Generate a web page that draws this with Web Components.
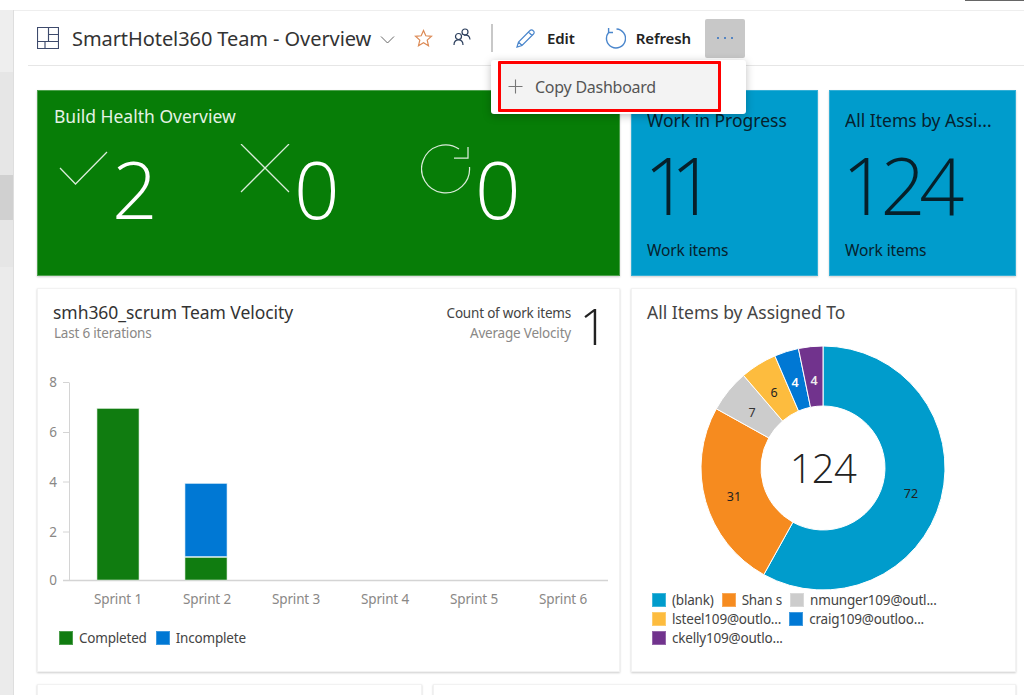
<!DOCTYPE html>
<html><head><meta charset="utf-8">
<style>
html,body{margin:0;padding:0;width:1024px;height:695px;overflow:hidden;background:#fff;font-family:"Noto Sans","Open Sans",sans-serif}
</style></head><body>
<dash-app></dash-app>
<script>
const FONT='"Noto Sans","Open Sans",sans-serif';
class Base extends HTMLElement{
  constructor(){super();this.attachShadow({mode:'open'}).innerHTML=this.tpl();}
}
customElements.define('dash-tile',class extends Base{tpl(){return `<style>
:host{display:block;position:relative;background:var(--bg,#fff);box-shadow:0 1px 2px rgba(0,0,0,.2);outline:1px solid var(--edge,rgba(0,0,0,.05));outline-offset:-1px;overflow:hidden;color:var(--fg,#222);min-width:0}
</style><slot></slot>`}});
customElements.define('count-tile',class extends Base{tpl(){return `<style>
:host{display:flex;flex-direction:column;height:100%;box-sizing:border-box;padding:19px 16px 16px;color:#06222e;font-family:${FONT}}
.t{font-size:17.5px;line-height:22px;white-space:nowrap;overflow:hidden}
.n{font-size:79px;line-height:84px;font-weight:300;margin:12px 0 0 -3px;letter-spacing:var(--num-ls,-6.5px);font-family:"Open Sans",sans-serif;color:#06202a}
.b{font-size:15.5px;line-height:20px;margin-top:auto;letter-spacing:-.1px}
</style><div class="t"><slot name="title"></slot></div><div class="n"><slot name="num"></slot></div><div class="b"><slot name="foot"></slot></div>`}});
customElements.define('build-stat',class extends Base{tpl(){return `<style>
:host{display:flex;align-items:flex-start;color:#fff}
.n{font-family:"Open Sans",sans-serif;font-weight:300;font-size:80px;line-height:84px;margin-left:4px}
::slotted(svg){display:block;width:50px;height:58px;margin-top:-2px;fill:none;stroke:rgba(255,255,255,.85);stroke-width:1.25;flex:none}
</style><slot name="icon"></slot><div class="n"><slot></slot></div>`}});
customElements.define('bar-chart',class extends Base{tpl(){
 const ax='#d4d4d4';
 const yt=[[8,382],[6,432],[4,481.5],[2,531.5],[0,580]];
 const off=288;
 let s='';
 yt.forEach(([v,y])=>{const Y=y-off;s+=`<line x1="26" x2="32" y1="${Y}" y2="${Y}" stroke="${ax}"/><text x="16" y="${Y+4.5}" text-anchor="middle" class="a">${v}</text>`});
 s+=`<line x1="32.5" x2="32.5" y1="${382-off}" y2="${580-off}" stroke="${ax}"/><line x1="26" x2="571" y1="292" y2="292" stroke="${ax}" stroke-width="1.3"/>`;
 s+=`<rect x="60" y="120" width="42" height="171.5" fill="#107c10" stroke="#cfe5cf" stroke-width=".6"/>`;
 s+=`<rect x="148" y="195" width="42" height="73" fill="#0078d4" stroke="#cce4f6" stroke-width=".6"/>`;
 s+=`<rect x="148" y="269" width="42" height="22.5" fill="#107c10" stroke="#cfe5cf" stroke-width=".6"/>`;
 ['Sprint 1','Sprint 2','Sprint 3','Sprint 4','Sprint 5','Sprint 6'].forEach((t,i)=>{s+=`<text x="${81+i*89}" y="315.5" text-anchor="middle" class="a">${t}</text>`});
 return `<style>:host{position:absolute;inset:0;display:block}
svg{display:block;width:100%;height:100%}
.a{font:13.5px ${FONT};fill:#8a8886;letter-spacing:-.15px}</style><svg viewBox="0 0 583 383">${s}</svg>`}});
customElements.define('donut-chart',class extends Base{tpl(){
 const cx=192,cy=180,R=122,r=62;
 const data=[[72,'#009ccc'],[31,'#f68b1f'],[7,'#cccccc'],[6,'#fdbc3e'],[4,'#0078d4'],[4,'#71338d']];
 let a=0,s='';
 const P=(rad,t)=>[cx+rad*Math.sin(t),cy-rad*Math.cos(t)].map(n=>n.toFixed(2)).join(' ');
 data.forEach(([v,c])=>{const b=a+v/124*2*Math.PI;const l=(b-a)>Math.PI?1:0;
  s+=`<path d="M${P(R,a)}A${R} ${R} 0 ${l} 1 ${P(R,b)}L${P(r,b)}A${r} ${r} 0 ${l} 0 ${P(r,a)}Z" fill="${c}" stroke="#fff" stroke-width="1"/>`;a=b});
 const lb=[[72,'#222',280,209.5],[31,'#222',103,212.5],[7,'#333',121,128.5],[6,'#222',143,108.5],[4,'#fff',164,98.5,1],[4,'#eee',183,96.5,1]];
 lb.forEach(([v,c,x,y,bold])=>{s+=`<text x="${x}" y="${y}" text-anchor="middle" class="l" fill="${c}"${bold?' font-weight="600"':''}>${v}</text>`});
 s+=`<text x="${cx}" y="${cy+15}" text-anchor="middle" class="c">124</text>`;
 return `<style>:host{position:absolute;left:0;top:0;width:386px;height:310px;display:block}
svg{display:block;width:386px;height:310px}
.l{font-family:${FONT};font-size:12.5px}.c{font:300 40px "Open Sans",sans-serif;fill:#222;letter-spacing:-.6px}</style><svg viewBox="0 0 386 310">${s}</svg>`}});
customElements.define('legend-item',class extends Base{tpl(){return `<style>
:host{display:inline-flex;align-items:center;gap:6px;font-size:13.5px;line-height:18px;color:#444;white-space:nowrap;font-family:${FONT};letter-spacing:-.2px}
i{display:block;width:14px;height:14px;background:var(--c);box-shadow:inset 0 0 0 1px rgba(255,255,255,.25);flex:none}
</style><i></i><slot></slot>`}});
customElements.define('tool-btn',class extends Base{tpl(){return `<style>
:host{display:inline-flex;align-items:center;gap:var(--g,10px);font:600 15px ${FONT};letter-spacing:-.1px;color:#222;white-space:nowrap;height:38px}
</style><slot name="icon"></slot><slot></slot>`}});
customElements.define('copy-menu',class extends Base{tpl(){return `<style>
:host{position:absolute;left:477px;top:49px;width:255px;height:54px;background:#fff;border-radius:3px;box-shadow:0 2px 8px rgba(0,0,0,.25);display:block;z-index:5}
.row{position:absolute;left:7px;top:1px;width:223px;height:51px;box-sizing:border-box;background:#f3f3f3;border:3px solid #f00;border-radius:1px;display:flex;align-items:center;font:16px ${FONT};letter-spacing:-.25px;color:#555;padding-left:6px;gap:11px;white-space:nowrap}
svg{width:17px;height:17px;stroke:#777;stroke-width:1.1;fill:none;display:block}
</style><div class="row"><svg viewBox="0 0 17 17"><path d="M8.5 1.5v14M1.5 8.5h14"/></svg><slot></slot></div>`}});
customElements.define('dash-app',class extends Base{tpl(){return `<style>
:host{display:flex;width:1024px;height:695px;position:relative;overflow:hidden;font-family:${FONT};background:#fff}
.side{width:13px;flex:none;margin-top:10px;border-right:1px solid #dedede;background:linear-gradient(#eeeeee 0 62px,#e6e6e6 62px 165px,#d0d0d0 165px 210px,#e6e6e6 210px 257px,#ebebeb 257px)}
.main{flex:1;min-width:0;border-top:1px solid #eee;margin-top:10px;display:flex;flex-direction:column;position:relative}
.cap{position:absolute;right:0;top:-11px;width:59px;height:1px;background:#666}
.bar{height:55px;margin-left:14px;border-bottom:1px solid #e6e6e6;display:flex;align-items:center;box-sizing:border-box;padding-left:9px;flex:none}
.ttl{font-size:20px;line-height:28px;letter-spacing:-.08px;color:#333;margin:2px 0 0 13px;white-space:nowrap;flex:none;width:295px}
.sep{width:1.5px;height:28px;background:#c8c8c8;flex:none}
.more{width:40px;height:39px;background:#c8c8c8;border-radius:2px;display:flex;align-items:center;justify-content:center;margin-left:14px;flex:none}
.grid{display:grid;grid-template-columns:repeat(5,187px);grid-auto-rows:186px;gap:12px 11px;margin:24px 0 0 23px;flex:none}
.green{grid-column:span 3;--bg:#077d07;--fg:#fff;--edge:rgba(255,255,255,.28)}
.b{--bg:#009ccc;--edge:rgba(255,255,255,.2)}
.vel{grid-column:span 3;grid-row:span 2}
.don{grid-column:span 2;grid-row:span 2}
.w2{grid-column:span 2}.w3{grid-column:span 3}
.gh{font-size:17.5px;line-height:22px;color:#e4f2e4;padding:15px 17px 0;white-space:nowrap}
.stats{display:flex;margin:19px 0 0 21px}
.stats build-stat:nth-child(1){width:182px}.stats build-stat:nth-child(2){width:181px}
.vh{position:absolute;left:16px;top:11px;font-size:17.5px;line-height:26px;color:#333;letter-spacing:-.05px;white-space:nowrap}
.vs{position:absolute;left:17px;top:36px;font-size:13.5px;line-height:18px;color:#8a8886;letter-spacing:-.2px}
.vr{position:absolute;right:49px;top:15px;text-align:right;font-size:13.5px;line-height:20px;letter-spacing:-.2px;color:#444;white-space:nowrap}
.vr span{display:block;color:#8a8886}
.vn{position:absolute;right:12px;top:8px;font:300 50px/60px "Open Sans",sans-serif;color:#222}
.vl{position:absolute;left:22px;top:341px;display:flex;gap:9px}
.dh{position:absolute;left:16px;top:11px;font-size:17.5px;line-height:26px;color:#444;white-space:nowrap}
.dl{position:absolute;left:21px;top:303px;width:340px;display:flex;flex-wrap:wrap;gap:1px 8px}
</style>
<div class="side"></div>
<div class="main">
  <div class="cap"></div>
  <div class="bar">
    <svg width="22" height="22" viewBox="0 0 22 22" fill="none" stroke="#3d4a6c" stroke-width="1.15" style="flex:none"><path d="M.5.5h21v21H.5zM.5 14.5h21M11.5.5v14M11.500 7.5h10M8 14.5v7"/></svg>
    <div class="ttl">SmartHotel360 Team - Overview</div>
    <svg width="15" height="9" viewBox="0 0 15 9" fill="none" stroke="#666" stroke-width="1" style="margin:3px 0 0 13px;flex:none"><path d="M1 1.5l6.5 6.5 6.5-6.5"/></svg>
    <svg width="19" height="19" viewBox="0 0 19 19" fill="none" stroke="#dc8a55" stroke-width="1.2" style="margin-left:19px;flex:none"><path d="M9.5 1.5l2.3 5.3 5.7.5-4.3 3.8 1.3 5.6-5-3-5 3 1.3-5.6-4.3-3.8 5.7-.5z"/></svg>
    <svg width="18" height="18" viewBox="0 0 18 18" fill="none" stroke="#2b3e5c" stroke-width="1.2" style="margin:-2px 0 0 20px;flex:none"><circle cx="12" cy="4" r="3"/><circle cx="5.5" cy="8.5" r="3"/><path d="M1 17c0-3 1.7-5.2 4.5-5.2S10 14 10 17M11 7.2h2c2.400 0 3.700 2 4 4.300"/></svg>
    <div class="sep" style="margin-left:20px"></div>
    <tool-btn style="margin-left:23.500px;--g:11px"><svg slot="icon" width="20" height="20" viewBox="0 0 20 20" fill="none" stroke="#4a86cc" stroke-width="1.2"><path d="M1 19l1.500-5L14 2.500a2 2 0 0 1 3 0l.5.5a2 2 0 0 1 0 3L6 17.500zM2.500 14L6 17.500M12.500 4l3.500 3.500"/></svg>Edit</tool-btn>
    <tool-btn style="margin-left:30px;--g:10px"><svg slot="icon" width="21" height="22" viewBox="0 0 21 22" fill="none" stroke="#4a86cc" stroke-width="1.400"><path d="M11.500 2A9.500 9.500 0 1 1 3.600 5.500M3.600 1v4.500H8"/></svg>Refresh</tool-btn>
    <div class="more"><svg width="20" height="4" viewBox="0 0 20 4" fill="#2f6fc0"><circle cx="3" cy="2" r="1"/><circle cx="10" cy="2" r="1"/><circle cx="17" cy="2" r="1"/></svg></div>
  </div>
  <div class="grid">
    <dash-tile class="green">
      <div class="gh">Build Health Overview</div>
      <div class="stats">
        <build-stat><svg slot="icon" viewBox="0 0 50 58"><path d="M2 24l15.500 16L49 8"/></svg>2</build-stat>
        <build-stat><svg slot="icon" viewBox="0 0 50 58"><path d="M1 0l48 48M49 0L1 48"/></svg>0</build-stat>
        <build-stat><svg slot="icon" viewBox="0 0 50 58"><path d="M38 5A24 24 0 1 0 48.500 23M33 14h14V3"/></svg>0</build-stat>
      </div>
    </dash-tile>
    <dash-tile class="b"><count-tile style="--num-ls:-18.5px"><span slot="title">Work in Progress</span><span slot="num">11</span><span slot="foot">Work items</span></count-tile></dash-tile>
    <dash-tile class="b"><count-tile><span slot="title">All Items by Assi...</span><span slot="num">124</span><span slot="foot">Work items</span></count-tile></dash-tile>
    <dash-tile class="vel">
      <bar-chart></bar-chart>
      <div class="vh">smh360_scrum Team Velocity</div>
      <div class="vs">Last 6 iterations</div>
      <div class="vr">Count of work items<span>Average Velocity</span></div>
      <div class="vn">1</div>
      <div class="vl"><legend-item style="--c:#107c10">Completed</legend-item><legend-item style="--c:#0078d4">Incomplete</legend-item></div>
    </dash-tile>
    <dash-tile class="don">
      <donut-chart></donut-chart>
      <div class="dh">All Items by Assigned To</div>
      <div class="dl">
        <legend-item style="--c:#009ccc">(blank)</legend-item><legend-item style="--c:#f68b1f">Shan s</legend-item><legend-item style="--c:#cccccc">nmunger109@outl...</legend-item>
        <legend-item style="--c:#fdbc3e">lsteel109@outlo...</legend-item><legend-item style="--c:#0078d4">craig109@outloo...</legend-item>
        <legend-item style="--c:#71338d;flex-basis:100%">ckelly109@outlo...</legend-item>
      </div>
    </dash-tile>
    <dash-tile class="w2"></dash-tile>
    <dash-tile class="w3"></dash-tile>
  </div>
  <copy-menu>Copy Dashboard</copy-menu>
</div>`}});
</script></body></html>
